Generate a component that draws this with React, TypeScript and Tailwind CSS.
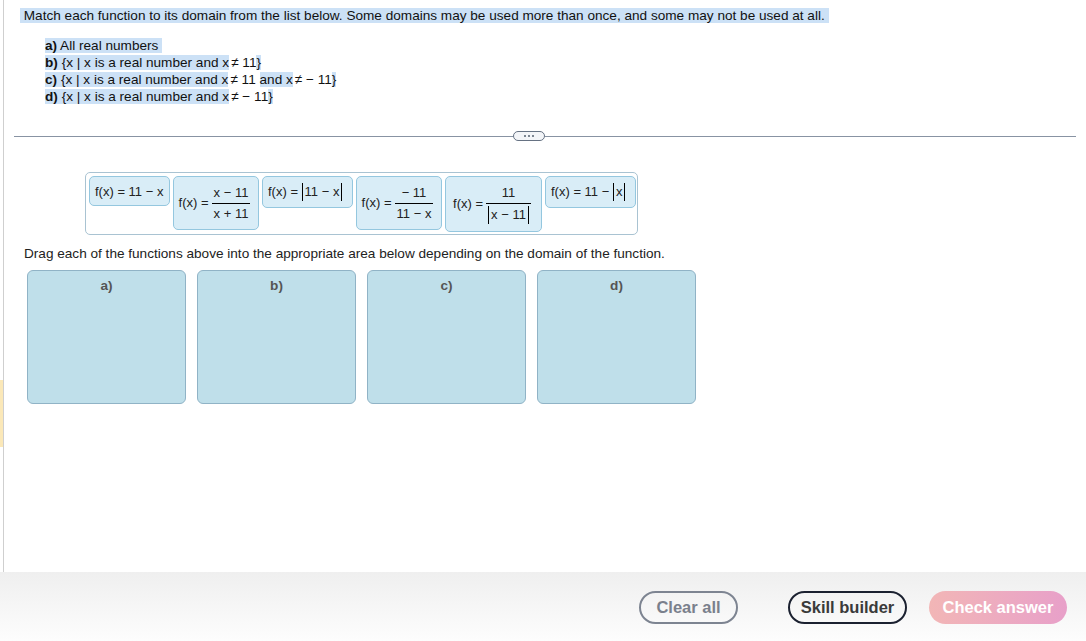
import React from 'react';

const font = { fontFamily: '"Liberation Sans", Arial, sans-serif' };

const Hl = ({ children }: { children: React.ReactNode }) => (
  <span className="bg-[#cce1f6]">{children}</span>
);

const Abs = ({ children }: { children: React.ReactNode }) => (
  <span className="inline-flex items-center border-x border-black h-[18px] px-[2px] leading-none align-middle">{children}</span>
);

const Frac = ({ num, den }: { num: React.ReactNode; den: React.ReactNode }) => (
  <span className="inline-flex flex-col items-center mx-[3px]">
    <span className="px-[2px] pb-[2px] leading-[16px]">{num}</span>
    <span className="px-[2px] pt-[2px] border-t border-black leading-[16px] w-full flex justify-center">{den}</span>
  </span>
);

const Tile = ({ w, h, children, frac }: { w: string; h: string; children: React.ReactNode; frac?: boolean }) => (
  <div
    className={`${w} ${h} shrink-0 bg-[#d9edf7] border border-[#94c7df] rounded-[5px] text-[13px] text-[#222] flex ${frac ? 'items-center justify-center' : 'items-start pt-[5px] pl-[5px]'}`}
  >
    {children}
  </div>
);

const DropBox = ({ label }: { label: string }) => (
  <div className="w-[159px] h-[134px] bg-[#bfdfea] border border-[#90b3c6] rounded-[6px] flex justify-center pt-[5px]">
    <span className="text-[13.6px] font-bold text-[#555]">{label}</span>
  </div>
);

export default function App() {
  return (
    <div className="relative w-[1086px] h-[641px] bg-white overflow-hidden flex flex-col text-[#111]" style={font}>
      <div className="absolute left-0 top-[380px] w-[3px] h-[67px] bg-[#fbe8b8]" />
      <div className="h-[572px] ml-[3px] border-l border-[#cfcfcf] flex flex-col">
        <div className="pl-[16px] pt-[8px] text-[13.6px] leading-[16px]">
          <Hl>&nbsp;Match each function to its domain from the list below. Some domains may be used more than once, and some may not be used at all.&nbsp;</Hl>
        </div>
        <div className="pl-[41px] pt-[13px] text-[13.6px] leading-[17px]">
          <div>
            <Hl><b>a)</b> All real numbers&nbsp;</Hl>
          </div>
          <div>
            <Hl><b>b)</b> {'{'}x | x is a real number and x</Hl>
            <span className="ml-[2px]">≠ 11</span>
            <Hl>{'}'}</Hl>
          </div>
          <div>
            <Hl><b>c)</b> {'{'}x | x is a real number and x</Hl>
            <span className="ml-[2px]">≠ 11 </span>
            <Hl>and x</Hl>
            <span className="ml-[2px]">≠ − 11</span>
            <Hl>{'}'}</Hl>
          </div>
          <div>
            <Hl><b>d)</b> {'{'}x | x is a real number and x</Hl>
            <span className="ml-[2px]">≠ − 11</span>
            <Hl>{'}'}</Hl>
          </div>
        </div>

        <div className="mt-[26px] ml-[10px] mr-[10px] flex items-center">
          <div className="w-[499px] h-px bg-[#8893a3]" />
          <div className="w-[32px] h-[10px] border border-[#667283] rounded-full bg-[#f3f5f8] flex items-center justify-center gap-[2px]">
            <span className="w-[2px] h-[2px] bg-[#556070] rounded-full" />
            <span className="w-[2px] h-[2px] bg-[#556070] rounded-full" />
            <span className="w-[2px] h-[2px] bg-[#556070] rounded-full" />
          </div>
          <div className="flex-1 h-px bg-[#8893a3]" />
        </div>

        <div className="mt-[31px] ml-[81px] w-[553px] h-[63px] border border-[#a9c3d2] rounded-[5px] p-[3px] flex items-start gap-[3px]">
          <Tile w="w-[81px]" h="h-[30px]">f(x) = 11 − x</Tile>
          <Tile w="w-[86px]" h="h-[54px]" frac>
            f(x) =<Frac num="x − 11" den="x + 11" />
          </Tile>
          <Tile w="w-[91px]" h="h-[32px]">
            <span className="flex items-center">f(x) =&nbsp;<Abs>11 − x</Abs></span>
          </Tile>
          <Tile w="w-[86px]" h="h-[54px]" frac>
            f(x) =<Frac num="− 11" den="11 − x" />
          </Tile>
          <Tile w="w-[97px]" h="h-[56px]" frac>
            f(x) =<Frac num="11" den={<Abs>x − 11</Abs>} />
          </Tile>
          <Tile w="w-[91px]" h="h-[32px]">
            <span className="flex items-center">f(x) = 11 −&nbsp;<Abs>x</Abs></span>
          </Tile>
        </div>

        <div className="pl-[20px] mt-[11px] text-[13.6px] leading-[16px] text-[#222]">
          Drag each of the functions above into the appropriate area below depending on the domain of the function.
        </div>

        <div className="ml-[23px] mt-[8px] flex gap-[11px]">
          <DropBox label="a)" />
          <DropBox label="b)" />
          <DropBox label="c)" />
          <DropBox label="d)" />
        </div>
      </div>

      <div className="flex-1 bg-gradient-to-b from-[#efefef] to-[#fdfdfd] flex items-start pt-[19px] pr-[19px] justify-end">
        <button className="w-[99px] h-[33px] rounded-full border-2 border-[#7d8491] text-[#7a808c] font-bold text-[16.5px] bg-transparent">
          Clear all
        </button>
        <button className="ml-[50px] w-[119px] h-[33px] rounded-full border-2 border-[#1b2130] text-[#3a3a3a] font-bold text-[16.5px] bg-transparent">
          Skill builder
        </button>
        <button className="ml-[22px] w-[138px] h-[33px] rounded-full bg-gradient-to-r from-[#f2b6b6] to-[#e8a0c9] text-white font-bold text-[16.5px]">
          Check answer
        </button>
      </div>
    </div>
  );
}
